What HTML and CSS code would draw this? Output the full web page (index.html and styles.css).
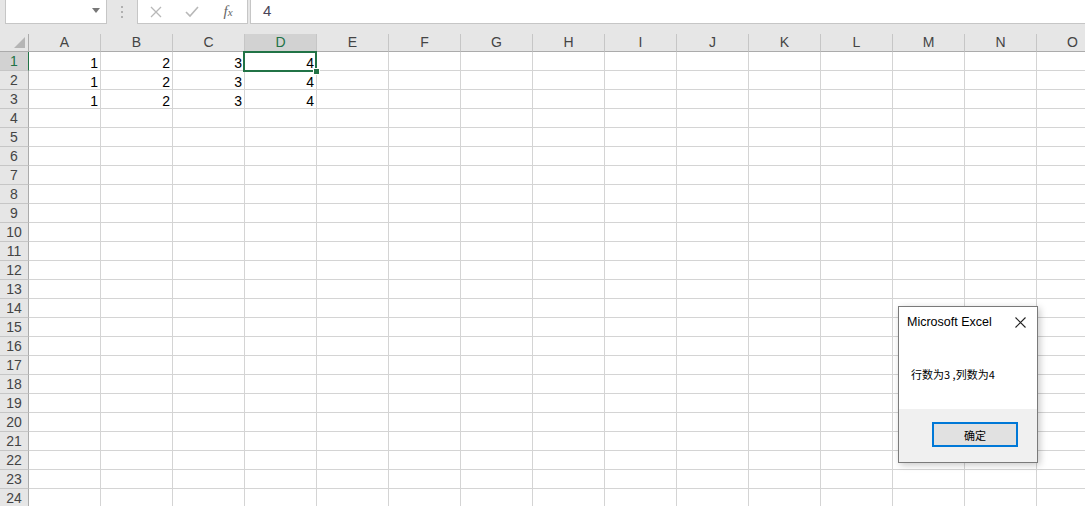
FILE: index.html
```html
<!DOCTYPE html>
<html lang="zh-CN">
<head>
    <meta charset="UTF-8">
    <title>Excel - 行列数</title>
    <link rel="stylesheet" href="styles.css">
</head>
<body>
    <!-- Formula bar -->
    <div class="formula-bar">
        <div class="name-box">
            <span class="caret"></span>
        </div>
        <div class="grip">
            <svg width="4" height="12" viewBox="0 0 4 12"><rect x="1" y="0" width="2" height="2" fill="#b0b0b0"/><rect x="1" y="5" width="2" height="2" fill="#b0b0b0"/><rect x="1" y="10" width="2" height="2" fill="#b0b0b0"/></svg>
        </div>
        <div class="fx-buttons">
            <span class="fx-btn">
                <svg width="12" height="12" viewBox="0 0 12 12"><path d="M1 1 L11 11 M11 1 L1 11" stroke="#b8b8b8" stroke-width="1.3" fill="none"/></svg>
            </span>
            <span class="fx-btn">
                <svg width="14" height="12" viewBox="0 0 14 12"><path d="M1 6 L5 10 L13 1" stroke="#b8b8b8" stroke-width="1.6" fill="none"/></svg>
            </span>
            <span class="fx-btn fx-label">f<small>x</small></span>
        </div>
        <div class="formula-input">4</div>
    </div>

    <!-- Sheet grid -->
    <div class="sheet">
        <table class="grid" id="grid">
            <thead>
                <tr id="colHeads">
                    <th class="corner"><span class="corner-tri"></span></th>
                </tr>
            </thead>
            <tbody id="rows"></tbody>
        </table>
        <div class="selection"><span class="fill-handle"></span></div>
    </div>

    <!-- Message box -->
    <div class="msgbox">
        <div class="msgbox-title">
            <span>Microsoft Excel</span>
            <svg class="msgbox-close" width="11" height="11" viewBox="0 0 11 11"><path d="M0.5 0.5 L10.5 10.5 M10.5 0.5 L0.5 10.5" stroke="#222" stroke-width="1.1" fill="none"/></svg>
        </div>
        <div class="msgbox-body">行数为3 ,列数为4</div>
        <div class="msgbox-footer">
            <button class="msgbox-btn">确定</button>
        </div>
    </div>

    <script>
        document.addEventListener('DOMContentLoaded', function() {
            const cols = 'ABCDEFGHIJKLMNO'.split('');
            const data = { 1: [1, 2, 3, 4], 2: [1, 2, 3, 4], 3: [1, 2, 3, 4] };
            const head = document.getElementById('colHeads');
            const body = document.getElementById('rows');

            cols.forEach(c => {
                const th = document.createElement('th');
                th.className = 'col-head' + (c === 'D' ? ' active' : '');
                th.textContent = c;
                head.appendChild(th);
            });

            for (let r = 1; r <= 24; r++) {
                const tr = document.createElement('tr');
                let html = `<th class="row-head${r === 1 ? ' active' : ''}">${r}</th>`;
                cols.forEach((c, i) => {
                    const v = data[r] && data[r][i] !== undefined ? data[r][i] : '';
                    html += `<td>${v}</td>`;
                });
                tr.innerHTML = html;
                body.appendChild(tr);
            }
        });
    </script>
</body>
</html>
```

FILE: styles.css
```css
/* General */
body {
    margin: 0;
    width: 1085px;
    height: 506px;
    overflow: hidden;
    font-family: 'Liberation Sans', Arial, sans-serif;
    background: #ffffff;
    position: relative;
}

/* Formula bar */
.formula-bar {
    display: flex;
    align-items: flex-start;
    height: 34px;
    background: #e6e6e6;
}

.name-box {
    margin-left: 5px;
    width: 100px;
    height: 23px;
    background: #fff;
    border: 1px solid #c6c6c6;
    border-top: none;
    position: relative;
}

.caret {
    position: absolute;
    right: 6px;
    top: 8px;
    border-left: 4px solid transparent;
    border-right: 4px solid transparent;
    border-top: 5px solid #777;
}

.grip {
    width: 30px;
    height: 23px;
    display: flex;
    align-items: center;
    justify-content: center;
}

.fx-buttons {
    display: flex;
    align-items: center;
    width: 109px;
    height: 23px;
    background: #fff;
    border: 1px solid #c6c6c6;
    border-top: none;
}

.fx-btn {
    width: 36px;
    display: flex;
    justify-content: center;
}

.fx-label {
    font-family: 'Liberation Serif', serif;
    font-style: italic;
    font-size: 15px;
    color: #666;
    align-items: baseline;
}

.fx-label small {
    font-size: 11px;
}

.formula-input {
    flex: 1;
    margin-left: 2px;
    height: 23px;
    background: #fff;
    border-bottom: 1px solid #c6c6c6;
    border-left: 1px solid #c6c6c6;
    padding-left: 12px;
    font-size: 15px;
    line-height: 21px;
    color: #4a4458;
}

/* Grid */
.sheet {
    position: relative;
}

.grid {
    width: 1109px;
    border-collapse: separate;
    border-spacing: 0;
    table-layout: fixed;
}

.grid th,
.grid td {
    height: 18px;
    padding: 0;
    font-size: 14px;
    line-height: 18px;
    box-sizing: content-box;
}

.grid thead th {
    height: 17px;
    line-height: 17px;
}

.corner {
    width: 28px;
    background: #e6e6e6;
    border-right: 1px solid #ababab;
    border-bottom: 1px solid #ababab;
    position: relative;
}

.corner-tri {
    position: absolute;
    right: 3px;
    bottom: 3px;
    border-left: 11px solid transparent;
    border-bottom: 11px solid #b5b5b5;
}

.col-head {
    width: 71px;
    background: #e6e6e6;
    color: #444;
    font-weight: normal;
    border-right: 1px solid #c6c6c6;
    border-bottom: 1px solid #ababab;
    text-align: center;
}

.row-head {
    background: #e6e6e6;
    color: #444;
    font-weight: normal;
    border-right: 1px solid #ababab;
    border-bottom: 1px solid #c6c6c6;
    text-align: center;
}

.col-head.active,
.row-head.active {
    background: #d2d2d2;
    color: #217346;
}

.col-head.active {
    border-bottom-color: #217346;
}

.row-head.active {
    border-right-color: #217346;
}

.grid td {
    border-right: 1px solid #d4d4d4;
    border-bottom: 1px solid #d4d4d4;
    text-align: right;
    color: #000;
    white-space: nowrap;
}

.grid td:not(:empty) {
    height: 13px;
    padding: 5px 2px 0 0;
    line-height: 13px;
}

/* Active cell outline */
.selection {
    position: absolute;
    left: 243px;
    top: 17px;
    width: 70px;
    height: 17px;
    border: 2px solid #217346;
}

.fill-handle {
    position: absolute;
    right: -5px;
    bottom: -5px;
    width: 5px;
    height: 5px;
    background: #217346;
    border: 1px solid #fff;
}

/* Message box */
.msgbox {
    position: absolute;
    left: 898px;
    top: 306px;
    width: 138px;
    height: 155px;
    background: #fff;
    border: 1px solid #7a7a7a;
    box-shadow: 2px 2px 7px rgba(0, 0, 0, 0.22);
    display: flex;
    flex-direction: column;
}

.msgbox-title {
    height: 30px;
    display: flex;
    align-items: center;
    justify-content: space-between;
    padding: 0 11px 0 8px;
    font-size: 12.5px;
    color: #000;
}

.msgbox-body {
    flex: 1;
    padding: 29px 0 0 12px;
    font-family: 'Noto Sans CJK SC', sans-serif;
    font-size: 11px;
    line-height: 16px;
    color: #000;
}

.msgbox-footer {
    height: 53px;
    background: #f0f0f0;
    display: flex;
    justify-content: flex-end;
    align-items: flex-start;
    padding: 13px 19px 0 0;
    box-sizing: border-box;
}

.msgbox-btn {
    width: 86px;
    height: 25px;
    background: #e1e1e1;
    border: 2px solid #0078d7;
    padding: 0;
    font-family: 'Noto Sans CJK SC', sans-serif;
    font-size: 11px;
    color: #000;
}
```
